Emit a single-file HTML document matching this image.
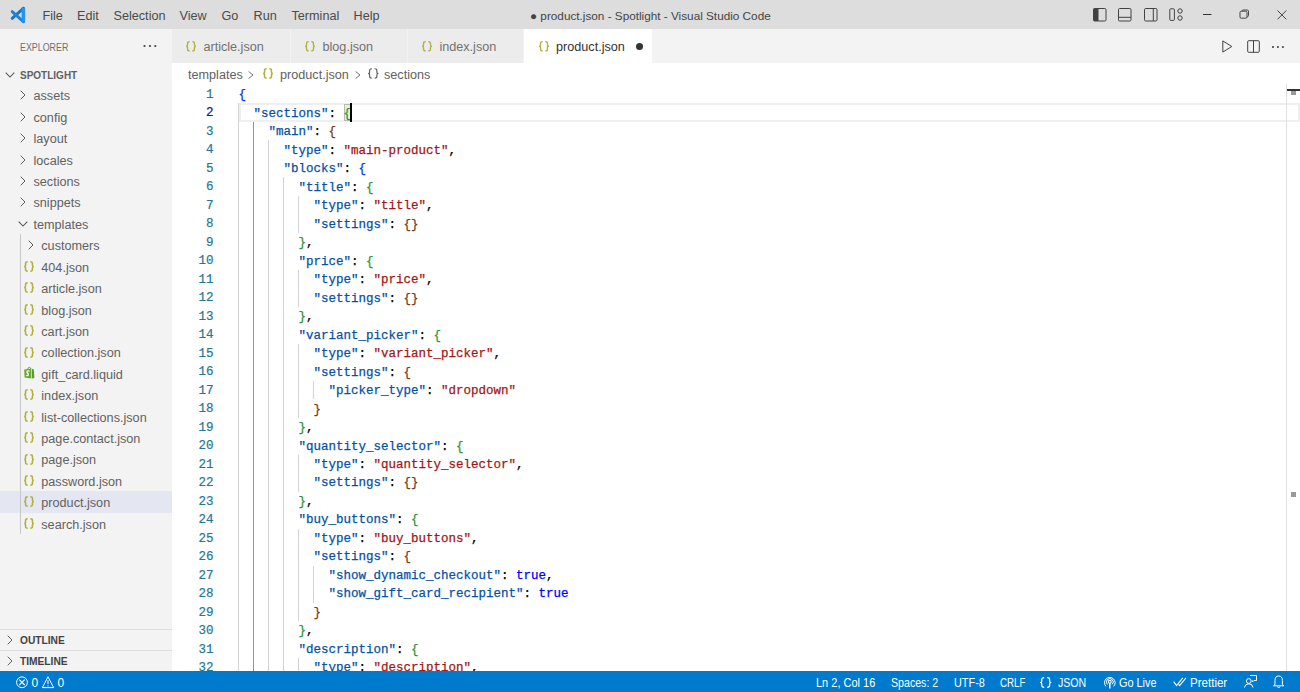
<!DOCTYPE html>
<html><head><meta charset="utf-8">
<style>
*{margin:0;padding:0;box-sizing:border-box}
html,body{width:1300px;height:692px;overflow:hidden;background:#fff;font-family:"Liberation Sans",sans-serif;}
.abs{position:absolute}
#title{position:absolute;left:0;top:0;width:1300px;height:29px;background:#dddddd}
.menu{position:absolute;top:1.5px;height:29px;line-height:29px;font-size:12.65px;color:#4a4a4a;white-space:nowrap}
#wtitle{position:absolute;top:0.5px;left:530px;height:29px;line-height:29px;font-size:11.75px;color:#444;white-space:nowrap}
#side{position:absolute;left:0;top:29px;width:172px;height:642px;background:#f3f3f3;overflow:hidden}
.row{position:absolute;left:0;width:172px;height:21.41px;line-height:21.41px;font-size:12.65px;color:#616161;white-space:nowrap}
.row .t{position:absolute;top:2px}
.sel{background:#e4e6f1}
#tabs{position:absolute;left:172px;top:29px;width:1128px;height:34px;background:#f3f3f3}
.tab{position:absolute;top:0;height:34px;background:#ececec;border-right:1px solid #f3f3f3}
.tab .t{position:absolute;top:0.9px;line-height:34px;font-size:12.65px;color:#717171;white-space:nowrap}
.tab.act{background:#fff}
.tab.act .t{color:#333}
#crumb{position:absolute;left:172px;top:63px;height:21.4px;line-height:21.4px;font-size:12.65px;color:#616161;white-space:nowrap;width:1128px}
#crumb span{position:absolute;top:1.5px}
#status{position:absolute;left:0;top:671.3px;width:1300px;height:20.7px;background:#007acc;color:#fff;font-size:12px}
#status .t{position:absolute;top:2.1px;line-height:21px;white-space:nowrap;transform-origin:0 0}
.ln{position:absolute;height:18.49px;line-height:18.49px;padding-top:1.3px;font-family:"Liberation Mono",monospace;font-size:12.5px;white-space:pre;color:#000;-webkit-text-stroke:0.25px currentColor}
.num{position:absolute;left:180px;width:33.5px;text-align:right;height:18.49px;line-height:18.49px;padding-top:1.1px;font-family:"Liberation Mono",monospace;font-size:12.5px;color:#237893;-webkit-text-stroke:0.2px currentColor}
.num.act{color:#0b216f}
.k{color:#0451a5}.s{color:#a31515}.p{color:#000}.b1{color:#0431fa}.b2{color:#319331}.b3{color:#7b3814}.t{}
.ln .t2{color:#0000ff}
.g{position:absolute;width:1px;height:18.49px;background:#d3d3d3}
.ga{background:#939393}
svg{position:absolute;overflow:visible}
</style></head><body>
<!-- TITLE BAR -->
<div id="title">
  <svg style="left:9px;top:7px" width="17" height="16" viewBox="0 0 17 16">
    <path d="M14.6 1.2 L3.2 11.4" stroke="#1c74c4" stroke-width="2.9" stroke-linecap="round"/>
    <path d="M14.6 14.8 L3.2 4.6" stroke="#1f82d6" stroke-width="2.9" stroke-linecap="round"/>
    <path d="M12.6 0.6 L15.4 1.6 Q16.2 2 16.2 2.9 L16.2 13.1 Q16.2 14 15.4 14.4 L12.6 15.4 Z" fill="#2496ed"/>
  </svg>
  <div class="menu" style="left:42.5px">File</div>
  <div class="menu" style="left:77px">Edit</div>
  <div class="menu" style="left:113.5px">Selection</div>
  <div class="menu" style="left:179.5px">View</div>
  <div class="menu" style="left:221.5px">Go</div>
  <div class="menu" style="left:253.5px">Run</div>
  <div class="menu" style="left:291.5px">Terminal</div>
  <div class="menu" style="left:353.5px">Help</div>
  <div id="wtitle">● product.json - Spotlight - Visual Studio Code</div>
  <!-- layout icons -->
  <svg style="left:1093px;top:8px" width="14" height="14" viewBox="0 0 14 14">
    <rect x="0.5" y="0.5" width="12.5" height="12.5" rx="1.2" fill="none" stroke="#424242" stroke-width="1"/>
    <rect x="0.5" y="0.5" width="5" height="12.5" fill="#424242"/>
  </svg>
  <svg style="left:1118px;top:8px" width="14" height="14" viewBox="0 0 14 14">
    <rect x="0.5" y="0.5" width="12.5" height="12.5" rx="1.2" fill="none" stroke="#424242" stroke-width="1"/>
    <line x1="0.5" y1="9.3" x2="13" y2="9.3" stroke="#424242" stroke-width="1"/>
  </svg>
  <svg style="left:1143.5px;top:8px" width="14" height="14" viewBox="0 0 14 14">
    <rect x="0.5" y="0.5" width="12.5" height="12.5" rx="1.2" fill="none" stroke="#424242" stroke-width="1"/>
    <line x1="9.3" y1="0.5" x2="9.3" y2="13" stroke="#424242" stroke-width="1"/>
  </svg>
  <svg style="left:1169px;top:8px" width="14" height="14" viewBox="0 0 14 14">
    <rect x="0.8" y="0.8" width="4.6" height="11.6" rx="1" fill="none" stroke="#424242" stroke-width="1"/>
    <circle cx="11" cy="3" r="2.2" fill="none" stroke="#424242" stroke-width="1"/>
    <circle cx="11" cy="10" r="2.2" fill="none" stroke="#424242" stroke-width="1"/>
  </svg>
  <!-- window controls -->
  <svg style="left:1202px;top:8px" width="12" height="12" viewBox="0 0 12 12"><line x1="1" y1="6.5" x2="9.5" y2="6.5" stroke="#333" stroke-width="1"/></svg>
  <svg style="left:1239px;top:9px" width="12" height="12" viewBox="0 0 12 12">
    <rect x="1" y="2.2" width="7" height="7" rx="1.2" fill="none" stroke="#444" stroke-width="1"/>
    <path d="M3 2.2 Q3 1 4.2 1 L8.3 1 Q9.5 1 9.5 2.2 L9.5 6.5 Q9.5 7.7 8.3 7.7" fill="none" stroke="#444" stroke-width="1"/>
  </svg>
  <svg style="left:1277px;top:10px" width="10" height="10" viewBox="0 0 10 10"><path d="M0.5 0.5 L9.3 9.3 M9.3 0.5 L0.5 9.3" stroke="#333" stroke-width="0.9"/></svg>
</div>

<!-- SIDEBAR -->
<div id="side">
  <div class="abs" style="left:20px;top:1.4px;height:34px;line-height:34px;font-size:10.7px;color:#6f6f6f;transform:scaleX(0.83);transform-origin:0 0">EXPLORER</div>
  <svg style="left:142px;top:15px" width="16" height="4" viewBox="0 0 16 4"><circle cx="2.5" cy="2" r="1.1" fill="#424242"/><circle cx="8" cy="2" r="1.1" fill="#424242"/><circle cx="13.3" cy="2" r="1.1" fill="#424242"/></svg>
<div class="row" style="top:34px"><svg style="left:5px;top:8.5px" width="10" height="6" viewBox="0 0 10 6"><path d="M0.7 0.7 L5 5 L9.3 0.7" fill="none" stroke="#555555" stroke-width="1.05"/></svg><span class="t" style="left:20px;font-size:10px;font-weight:bold;color:#616161">SPOTLIGHT</span></div>
<div class="row" style="top:55.41px"><svg style="left:20px;top:6px" width="6" height="10" viewBox="0 0 6 10"><path d="M0.7 0.7 L5 5 L0.7 9.3" fill="none" stroke="#555555" stroke-width="0.95"/></svg><span class="t" style="left:33.5px">assets</span></div>
<div class="row" style="top:76.82px"><svg style="left:20px;top:6px" width="6" height="10" viewBox="0 0 6 10"><path d="M0.7 0.7 L5 5 L0.7 9.3" fill="none" stroke="#555555" stroke-width="0.95"/></svg><span class="t" style="left:33.5px">config</span></div>
<div class="row" style="top:98.23px"><svg style="left:20px;top:6px" width="6" height="10" viewBox="0 0 6 10"><path d="M0.7 0.7 L5 5 L0.7 9.3" fill="none" stroke="#555555" stroke-width="0.95"/></svg><span class="t" style="left:33.5px">layout</span></div>
<div class="row" style="top:119.64px"><svg style="left:20px;top:6px" width="6" height="10" viewBox="0 0 6 10"><path d="M0.7 0.7 L5 5 L0.7 9.3" fill="none" stroke="#555555" stroke-width="0.95"/></svg><span class="t" style="left:33.5px">locales</span></div>
<div class="row" style="top:141.05px"><svg style="left:20px;top:6px" width="6" height="10" viewBox="0 0 6 10"><path d="M0.7 0.7 L5 5 L0.7 9.3" fill="none" stroke="#555555" stroke-width="0.95"/></svg><span class="t" style="left:33.5px">sections</span></div>
<div class="row" style="top:162.46px"><svg style="left:20px;top:6px" width="6" height="10" viewBox="0 0 6 10"><path d="M0.7 0.7 L5 5 L0.7 9.3" fill="none" stroke="#555555" stroke-width="0.95"/></svg><span class="t" style="left:33.5px">snippets</span></div>
<div class="row" style="top:183.87px"><svg style="left:17.5px;top:8px" width="10" height="6" viewBox="0 0 10 6"><path d="M0.7 0.7 L5 5 L9.3 0.7" fill="none" stroke="#555555" stroke-width="1.05"/></svg><span class="t" style="left:33.5px">templates</span></div>
<div class="row" style="top:205.28px"><svg style="left:27.5px;top:6px" width="6" height="10" viewBox="0 0 6 10"><path d="M0.7 0.7 L5 5 L0.7 9.3" fill="none" stroke="#555555" stroke-width="0.95"/></svg><span class="t" style="left:41.3px">customers</span></div>
<div class="row" style="top:226.69px"><svg style="left:24px;top:5.2px" width="10" height="11" viewBox="0 0 10 11"><path d="M3.70 0.7 Q1.55 0.7 1.55 2.4 L1.55 4.20 Q1.55 5.50 0.10 5.50 Q1.55 5.50 1.55 6.80 L1.55 8.60 Q1.55 10.30 3.70 10.30 M6.30 0.7 Q8.45 0.7 8.45 2.4 L8.45 4.20 Q8.45 5.50 9.90 5.50 Q8.45 5.50 8.45 6.80 L8.45 8.60 Q8.45 10.30 6.30 10.30" fill="none" stroke="#b0b23c" stroke-width="1.55"/></svg><span class="t" style="left:41.3px">404.json</span></div>
<div class="row" style="top:248.10px"><svg style="left:24px;top:5.2px" width="10" height="11" viewBox="0 0 10 11"><path d="M3.70 0.7 Q1.55 0.7 1.55 2.4 L1.55 4.20 Q1.55 5.50 0.10 5.50 Q1.55 5.50 1.55 6.80 L1.55 8.60 Q1.55 10.30 3.70 10.30 M6.30 0.7 Q8.45 0.7 8.45 2.4 L8.45 4.20 Q8.45 5.50 9.90 5.50 Q8.45 5.50 8.45 6.80 L8.45 8.60 Q8.45 10.30 6.30 10.30" fill="none" stroke="#b0b23c" stroke-width="1.55"/></svg><span class="t" style="left:41.3px">article.json</span></div>
<div class="row" style="top:269.51px"><svg style="left:24px;top:5.2px" width="10" height="11" viewBox="0 0 10 11"><path d="M3.70 0.7 Q1.55 0.7 1.55 2.4 L1.55 4.20 Q1.55 5.50 0.10 5.50 Q1.55 5.50 1.55 6.80 L1.55 8.60 Q1.55 10.30 3.70 10.30 M6.30 0.7 Q8.45 0.7 8.45 2.4 L8.45 4.20 Q8.45 5.50 9.90 5.50 Q8.45 5.50 8.45 6.80 L8.45 8.60 Q8.45 10.30 6.30 10.30" fill="none" stroke="#b0b23c" stroke-width="1.55"/></svg><span class="t" style="left:41.3px">blog.json</span></div>
<div class="row" style="top:290.92px"><svg style="left:24px;top:5.2px" width="10" height="11" viewBox="0 0 10 11"><path d="M3.70 0.7 Q1.55 0.7 1.55 2.4 L1.55 4.20 Q1.55 5.50 0.10 5.50 Q1.55 5.50 1.55 6.80 L1.55 8.60 Q1.55 10.30 3.70 10.30 M6.30 0.7 Q8.45 0.7 8.45 2.4 L8.45 4.20 Q8.45 5.50 9.90 5.50 Q8.45 5.50 8.45 6.80 L8.45 8.60 Q8.45 10.30 6.30 10.30" fill="none" stroke="#b0b23c" stroke-width="1.55"/></svg><span class="t" style="left:41.3px">cart.json</span></div>
<div class="row" style="top:312.33px"><svg style="left:24px;top:5.2px" width="10" height="11" viewBox="0 0 10 11"><path d="M3.70 0.7 Q1.55 0.7 1.55 2.4 L1.55 4.20 Q1.55 5.50 0.10 5.50 Q1.55 5.50 1.55 6.80 L1.55 8.60 Q1.55 10.30 3.70 10.30 M6.30 0.7 Q8.45 0.7 8.45 2.4 L8.45 4.20 Q8.45 5.50 9.90 5.50 Q8.45 5.50 8.45 6.80 L8.45 8.60 Q8.45 10.30 6.30 10.30" fill="none" stroke="#b0b23c" stroke-width="1.55"/></svg><span class="t" style="left:41.3px">collection.json</span></div>
<div class="row" style="top:333.74px"><svg style="left:24px;top:4.5px" width="11" height="12" viewBox="0 0 11 12"><path d="M3.6 2.6 Q3.8 0.4 5.4 0.4 Q6.6 0.4 6.9 2" fill="none" stroke="#5e9e2e" stroke-width="1"/><path d="M0.2 2.6 L7.2 1.8 L7.2 11.4 L0.6 10.6 Z" fill="#67a830"/><path d="M7.8 1.8 L9.8 2.4 L10.4 11 L7.8 11.4 Z" fill="#5a9a2a"/><path d="M5.6 4.2 Q4.6 3.6 3.6 4 Q2.4 4.6 3.2 5.8 Q4.6 6.8 4.4 7.8 Q4 9 2.2 8.4" fill="none" stroke="#fff" stroke-width="1.3"/></svg><span class="t" style="left:41.3px">gift_card.liquid</span></div>
<div class="row" style="top:355.15px"><svg style="left:24px;top:5.2px" width="10" height="11" viewBox="0 0 10 11"><path d="M3.70 0.7 Q1.55 0.7 1.55 2.4 L1.55 4.20 Q1.55 5.50 0.10 5.50 Q1.55 5.50 1.55 6.80 L1.55 8.60 Q1.55 10.30 3.70 10.30 M6.30 0.7 Q8.45 0.7 8.45 2.4 L8.45 4.20 Q8.45 5.50 9.90 5.50 Q8.45 5.50 8.45 6.80 L8.45 8.60 Q8.45 10.30 6.30 10.30" fill="none" stroke="#b0b23c" stroke-width="1.55"/></svg><span class="t" style="left:41.3px">index.json</span></div>
<div class="row" style="top:376.56px"><svg style="left:24px;top:5.2px" width="10" height="11" viewBox="0 0 10 11"><path d="M3.70 0.7 Q1.55 0.7 1.55 2.4 L1.55 4.20 Q1.55 5.50 0.10 5.50 Q1.55 5.50 1.55 6.80 L1.55 8.60 Q1.55 10.30 3.70 10.30 M6.30 0.7 Q8.45 0.7 8.45 2.4 L8.45 4.20 Q8.45 5.50 9.90 5.50 Q8.45 5.50 8.45 6.80 L8.45 8.60 Q8.45 10.30 6.30 10.30" fill="none" stroke="#b0b23c" stroke-width="1.55"/></svg><span class="t" style="left:41.3px">list-collections.json</span></div>
<div class="row" style="top:397.97px"><svg style="left:24px;top:5.2px" width="10" height="11" viewBox="0 0 10 11"><path d="M3.70 0.7 Q1.55 0.7 1.55 2.4 L1.55 4.20 Q1.55 5.50 0.10 5.50 Q1.55 5.50 1.55 6.80 L1.55 8.60 Q1.55 10.30 3.70 10.30 M6.30 0.7 Q8.45 0.7 8.45 2.4 L8.45 4.20 Q8.45 5.50 9.90 5.50 Q8.45 5.50 8.45 6.80 L8.45 8.60 Q8.45 10.30 6.30 10.30" fill="none" stroke="#b0b23c" stroke-width="1.55"/></svg><span class="t" style="left:41.3px">page.contact.json</span></div>
<div class="row" style="top:419.38px"><svg style="left:24px;top:5.2px" width="10" height="11" viewBox="0 0 10 11"><path d="M3.70 0.7 Q1.55 0.7 1.55 2.4 L1.55 4.20 Q1.55 5.50 0.10 5.50 Q1.55 5.50 1.55 6.80 L1.55 8.60 Q1.55 10.30 3.70 10.30 M6.30 0.7 Q8.45 0.7 8.45 2.4 L8.45 4.20 Q8.45 5.50 9.90 5.50 Q8.45 5.50 8.45 6.80 L8.45 8.60 Q8.45 10.30 6.30 10.30" fill="none" stroke="#b0b23c" stroke-width="1.55"/></svg><span class="t" style="left:41.3px">page.json</span></div>
<div class="row" style="top:440.79px"><svg style="left:24px;top:5.2px" width="10" height="11" viewBox="0 0 10 11"><path d="M3.70 0.7 Q1.55 0.7 1.55 2.4 L1.55 4.20 Q1.55 5.50 0.10 5.50 Q1.55 5.50 1.55 6.80 L1.55 8.60 Q1.55 10.30 3.70 10.30 M6.30 0.7 Q8.45 0.7 8.45 2.4 L8.45 4.20 Q8.45 5.50 9.90 5.50 Q8.45 5.50 8.45 6.80 L8.45 8.60 Q8.45 10.30 6.30 10.30" fill="none" stroke="#b0b23c" stroke-width="1.55"/></svg><span class="t" style="left:41.3px">password.json</span></div>
<div class="row sel" style="top:462.20px"><svg style="left:24px;top:5.2px" width="10" height="11" viewBox="0 0 10 11"><path d="M3.70 0.7 Q1.55 0.7 1.55 2.4 L1.55 4.20 Q1.55 5.50 0.10 5.50 Q1.55 5.50 1.55 6.80 L1.55 8.60 Q1.55 10.30 3.70 10.30 M6.30 0.7 Q8.45 0.7 8.45 2.4 L8.45 4.20 Q8.45 5.50 9.90 5.50 Q8.45 5.50 8.45 6.80 L8.45 8.60 Q8.45 10.30 6.30 10.30" fill="none" stroke="#b0b23c" stroke-width="1.55"/></svg><span class="t" style="left:41.3px">product.json</span></div>
<div class="row" style="top:483.61px"><svg style="left:24px;top:5.2px" width="10" height="11" viewBox="0 0 10 11"><path d="M3.70 0.7 Q1.55 0.7 1.55 2.4 L1.55 4.20 Q1.55 5.50 0.10 5.50 Q1.55 5.50 1.55 6.80 L1.55 8.60 Q1.55 10.30 3.70 10.30 M6.30 0.7 Q8.45 0.7 8.45 2.4 L8.45 4.20 Q8.45 5.50 9.90 5.50 Q8.45 5.50 8.45 6.80 L8.45 8.60 Q8.45 10.30 6.30 10.30" fill="none" stroke="#b0b23c" stroke-width="1.55"/></svg><span class="t" style="left:41.3px">search.json</span></div>
<div class="abs" style="left:19.5px;top:205.28px;width:1px;height:299.74px;background:#c6c6c6"></div>
<div class="abs" style="left:0;top:600px;width:172px;height:21px;border-top:1px solid #dedede"><svg style="left:7px;top:5.2px" width="6" height="10" viewBox="0 0 6 10"><path d="M0.7 0.7 L5 5 L0.7 9.3" fill="none" stroke="#555555" stroke-width="0.95"/></svg><span class="abs" style="left:20px;top:1px;line-height:20px;font-size:10.2px;font-weight:bold;color:#424242">OUTLINE</span></div>
<div class="abs" style="left:0;top:621px;width:172px;height:21px;border-top:1px solid #dedede"><svg style="left:7px;top:5.2px" width="6" height="10" viewBox="0 0 6 10"><path d="M0.7 0.7 L5 5 L0.7 9.3" fill="none" stroke="#555555" stroke-width="0.95"/></svg><span class="abs" style="left:20px;top:1px;line-height:20px;font-size:10.2px;font-weight:bold;color:#424242">TIMELINE</span></div>
</div>

<!-- TABS -->
<div id="tabs">
<div class="tab" style="left:0px;width:119px"><svg style="left:14px;top:11.8px" width="10" height="10.6" viewBox="0 0 10 10.6"><path d="M3.70 0.7 Q1.55 0.7 1.55 2.4 L1.55 4.00 Q1.55 5.30 0.10 5.30 Q1.55 5.30 1.55 6.60 L1.55 8.20 Q1.55 9.90 3.70 9.90 M6.30 0.7 Q8.45 0.7 8.45 2.4 L8.45 4.00 Q8.45 5.30 9.90 5.30 Q8.45 5.30 8.45 6.60 L8.45 8.20 Q8.45 9.90 6.30 9.90" fill="none" stroke="#b0b23c" stroke-width="1.35"/></svg><span class="t" style="left:31.4px">article.json</span></div>
<div class="tab" style="left:119px;width:117px"><svg style="left:13.6px;top:11.8px" width="10" height="10.6" viewBox="0 0 10 10.6"><path d="M3.70 0.7 Q1.55 0.7 1.55 2.4 L1.55 4.00 Q1.55 5.30 0.10 5.30 Q1.55 5.30 1.55 6.60 L1.55 8.20 Q1.55 9.90 3.70 9.90 M6.30 0.7 Q8.45 0.7 8.45 2.4 L8.45 4.00 Q8.45 5.30 9.90 5.30 Q8.45 5.30 8.45 6.60 L8.45 8.20 Q8.45 9.90 6.30 9.90" fill="none" stroke="#b0b23c" stroke-width="1.35"/></svg><span class="t" style="left:31.5px">blog.json</span></div>
<div class="tab" style="left:236px;width:116px"><svg style="left:13.5px;top:11.8px" width="10" height="10.6" viewBox="0 0 10 10.6"><path d="M3.70 0.7 Q1.55 0.7 1.55 2.4 L1.55 4.00 Q1.55 5.30 0.10 5.30 Q1.55 5.30 1.55 6.60 L1.55 8.20 Q1.55 9.90 3.70 9.90 M6.30 0.7 Q8.45 0.7 8.45 2.4 L8.45 4.00 Q8.45 5.30 9.90 5.30 Q8.45 5.30 8.45 6.60 L8.45 8.20 Q8.45 9.90 6.30 9.90" fill="none" stroke="#b0b23c" stroke-width="1.35"/></svg><span class="t" style="left:31.4px">index.json</span></div>
<div class="tab act" style="left:352px;width:129px"><svg style="left:14.8px;top:11.8px" width="10" height="10.6" viewBox="0 0 10 10.6"><path d="M3.70 0.7 Q1.55 0.7 1.55 2.4 L1.55 4.00 Q1.55 5.30 0.10 5.30 Q1.55 5.30 1.55 6.60 L1.55 8.20 Q1.55 9.90 3.70 9.90 M6.30 0.7 Q8.45 0.7 8.45 2.4 L8.45 4.00 Q8.45 5.30 9.90 5.30 Q8.45 5.30 8.45 6.60 L8.45 8.20 Q8.45 9.90 6.30 9.90" fill="none" stroke="#b0b23c" stroke-width="1.35"/></svg><span class="t" style="left:32px">product.json</span><div class="abs" style="left:111.7px;top:13.9px;width:7.6px;height:7.6px;border-radius:50%;background:#333"></div></div>
</div>

<!-- TAB ACTIONS -->
<svg style="left:1222px;top:40px" width="11" height="13" viewBox="0 0 11 13"><path d="M0.8 0.9 L9.8 6.5 L0.8 12.1 Z" fill="none" stroke="#424242" stroke-width="1" stroke-linejoin="round"/></svg>
<svg style="left:1246.5px;top:39.5px" width="13" height="13" viewBox="0 0 13 13"><rect x="0.7" y="0.7" width="11.6" height="11.6" rx="1" fill="none" stroke="#424242" stroke-width="1"/><line x1="6.5" y1="0.7" x2="6.5" y2="12.3" stroke="#424242" stroke-width="1"/></svg>
<svg style="left:1271px;top:44.5px" width="14" height="4" viewBox="0 0 14 4"><circle cx="2" cy="2" r="1.05" fill="#424242"/><circle cx="6.9" cy="2" r="1.05" fill="#424242"/><circle cx="11.9" cy="2" r="1.05" fill="#424242"/></svg>
<!-- BREADCRUMBS -->
<div id="crumb">
<span style="left:16px">templates</span>
<svg style="left:76.3px;top:7.8px" width="6" height="8" viewBox="0 0 6 8"><path d="M0.6 0.5 L5 4 L0.6 7.5" fill="none" stroke="#777" stroke-width="1"/></svg>
<svg style="left:91px;top:5.2px" width="10" height="11" viewBox="0 0 10 11"><path d="M3.70 0.7 Q1.55 0.7 1.55 2.4 L1.55 4.20 Q1.55 5.50 0.10 5.50 Q1.55 5.50 1.55 6.80 L1.55 8.60 Q1.55 10.30 3.70 10.30 M6.30 0.7 Q8.45 0.7 8.45 2.4 L8.45 4.20 Q8.45 5.50 9.90 5.50 Q8.45 5.50 8.45 6.80 L8.45 8.60 Q8.45 10.30 6.30 10.30" fill="none" stroke="#b0b23c" stroke-width="1.55"/></svg>
<span style="left:108px">product.json</span>
<svg style="left:182.5px;top:7.8px" width="6" height="8" viewBox="0 0 6 8"><path d="M0.6 0.5 L5 4 L0.6 7.5" fill="none" stroke="#777" stroke-width="1"/></svg>
<svg style="left:196px;top:5.2px" width="10.5" height="11" viewBox="0 0 10.5 11"><path d="M3.88 0.7 Q1.63 0.7 1.63 2.4 L1.63 4.20 Q1.63 5.50 0.10 5.50 Q1.63 5.50 1.63 6.80 L1.63 8.60 Q1.63 10.30 3.88 10.30 M6.62 0.7 Q8.87 0.7 8.87 2.4 L8.87 4.20 Q8.87 5.50 10.40 5.50 Q8.87 5.50 8.87 6.80 L8.87 8.60 Q8.87 10.30 6.62 10.30" fill="none" stroke="#555555" stroke-width="1.1"/></svg>
<span style="left:212px">sections</span>
</div>

<!-- EDITOR -->
<div id="editor">
<div class="abs" style="left:239px;top:102.8px;width:1061px;height:19.3px;border:2px solid #efefef"></div>
<div class="g" style="top:103.39px;left:238px"></div>
<div class="g" style="top:121.88px;left:238px"></div>
<div class="g ga" style="top:121.88px;left:253px"></div>
<div class="g" style="top:140.37px;left:238px"></div>
<div class="g ga" style="top:140.37px;left:253px"></div>
<div class="g" style="top:140.37px;left:268px"></div>
<div class="g" style="top:158.86px;left:238px"></div>
<div class="g ga" style="top:158.86px;left:253px"></div>
<div class="g" style="top:158.86px;left:268px"></div>
<div class="g" style="top:177.35px;left:238px"></div>
<div class="g ga" style="top:177.35px;left:253px"></div>
<div class="g" style="top:177.35px;left:268px"></div>
<div class="g" style="top:177.35px;left:283px"></div>
<div class="g" style="top:195.84px;left:238px"></div>
<div class="g ga" style="top:195.84px;left:253px"></div>
<div class="g" style="top:195.84px;left:268px"></div>
<div class="g" style="top:195.84px;left:283px"></div>
<div class="g" style="top:195.84px;left:298px"></div>
<div class="g" style="top:214.33px;left:238px"></div>
<div class="g ga" style="top:214.33px;left:253px"></div>
<div class="g" style="top:214.33px;left:268px"></div>
<div class="g" style="top:214.33px;left:283px"></div>
<div class="g" style="top:214.33px;left:298px"></div>
<div class="g" style="top:232.82px;left:238px"></div>
<div class="g ga" style="top:232.82px;left:253px"></div>
<div class="g" style="top:232.82px;left:268px"></div>
<div class="g" style="top:232.82px;left:283px"></div>
<div class="g" style="top:251.31px;left:238px"></div>
<div class="g ga" style="top:251.31px;left:253px"></div>
<div class="g" style="top:251.31px;left:268px"></div>
<div class="g" style="top:251.31px;left:283px"></div>
<div class="g" style="top:269.80px;left:238px"></div>
<div class="g ga" style="top:269.80px;left:253px"></div>
<div class="g" style="top:269.80px;left:268px"></div>
<div class="g" style="top:269.80px;left:283px"></div>
<div class="g" style="top:269.80px;left:298px"></div>
<div class="g" style="top:288.29px;left:238px"></div>
<div class="g ga" style="top:288.29px;left:253px"></div>
<div class="g" style="top:288.29px;left:268px"></div>
<div class="g" style="top:288.29px;left:283px"></div>
<div class="g" style="top:288.29px;left:298px"></div>
<div class="g" style="top:306.78px;left:238px"></div>
<div class="g ga" style="top:306.78px;left:253px"></div>
<div class="g" style="top:306.78px;left:268px"></div>
<div class="g" style="top:306.78px;left:283px"></div>
<div class="g" style="top:325.27px;left:238px"></div>
<div class="g ga" style="top:325.27px;left:253px"></div>
<div class="g" style="top:325.27px;left:268px"></div>
<div class="g" style="top:325.27px;left:283px"></div>
<div class="g" style="top:343.76px;left:238px"></div>
<div class="g ga" style="top:343.76px;left:253px"></div>
<div class="g" style="top:343.76px;left:268px"></div>
<div class="g" style="top:343.76px;left:283px"></div>
<div class="g" style="top:343.76px;left:298px"></div>
<div class="g" style="top:362.25px;left:238px"></div>
<div class="g ga" style="top:362.25px;left:253px"></div>
<div class="g" style="top:362.25px;left:268px"></div>
<div class="g" style="top:362.25px;left:283px"></div>
<div class="g" style="top:362.25px;left:298px"></div>
<div class="g" style="top:380.74px;left:238px"></div>
<div class="g ga" style="top:380.74px;left:253px"></div>
<div class="g" style="top:380.74px;left:268px"></div>
<div class="g" style="top:380.74px;left:283px"></div>
<div class="g" style="top:380.74px;left:298px"></div>
<div class="g" style="top:380.74px;left:313px"></div>
<div class="g" style="top:399.23px;left:238px"></div>
<div class="g ga" style="top:399.23px;left:253px"></div>
<div class="g" style="top:399.23px;left:268px"></div>
<div class="g" style="top:399.23px;left:283px"></div>
<div class="g" style="top:399.23px;left:298px"></div>
<div class="g" style="top:417.72px;left:238px"></div>
<div class="g ga" style="top:417.72px;left:253px"></div>
<div class="g" style="top:417.72px;left:268px"></div>
<div class="g" style="top:417.72px;left:283px"></div>
<div class="g" style="top:436.21px;left:238px"></div>
<div class="g ga" style="top:436.21px;left:253px"></div>
<div class="g" style="top:436.21px;left:268px"></div>
<div class="g" style="top:436.21px;left:283px"></div>
<div class="g" style="top:454.70px;left:238px"></div>
<div class="g ga" style="top:454.70px;left:253px"></div>
<div class="g" style="top:454.70px;left:268px"></div>
<div class="g" style="top:454.70px;left:283px"></div>
<div class="g" style="top:454.70px;left:298px"></div>
<div class="g" style="top:473.19px;left:238px"></div>
<div class="g ga" style="top:473.19px;left:253px"></div>
<div class="g" style="top:473.19px;left:268px"></div>
<div class="g" style="top:473.19px;left:283px"></div>
<div class="g" style="top:473.19px;left:298px"></div>
<div class="g" style="top:491.68px;left:238px"></div>
<div class="g ga" style="top:491.68px;left:253px"></div>
<div class="g" style="top:491.68px;left:268px"></div>
<div class="g" style="top:491.68px;left:283px"></div>
<div class="g" style="top:510.17px;left:238px"></div>
<div class="g ga" style="top:510.17px;left:253px"></div>
<div class="g" style="top:510.17px;left:268px"></div>
<div class="g" style="top:510.17px;left:283px"></div>
<div class="g" style="top:528.66px;left:238px"></div>
<div class="g ga" style="top:528.66px;left:253px"></div>
<div class="g" style="top:528.66px;left:268px"></div>
<div class="g" style="top:528.66px;left:283px"></div>
<div class="g" style="top:528.66px;left:298px"></div>
<div class="g" style="top:547.15px;left:238px"></div>
<div class="g ga" style="top:547.15px;left:253px"></div>
<div class="g" style="top:547.15px;left:268px"></div>
<div class="g" style="top:547.15px;left:283px"></div>
<div class="g" style="top:547.15px;left:298px"></div>
<div class="g" style="top:565.64px;left:238px"></div>
<div class="g ga" style="top:565.64px;left:253px"></div>
<div class="g" style="top:565.64px;left:268px"></div>
<div class="g" style="top:565.64px;left:283px"></div>
<div class="g" style="top:565.64px;left:298px"></div>
<div class="g" style="top:565.64px;left:313px"></div>
<div class="g" style="top:584.13px;left:238px"></div>
<div class="g ga" style="top:584.13px;left:253px"></div>
<div class="g" style="top:584.13px;left:268px"></div>
<div class="g" style="top:584.13px;left:283px"></div>
<div class="g" style="top:584.13px;left:298px"></div>
<div class="g" style="top:584.13px;left:313px"></div>
<div class="g" style="top:602.62px;left:238px"></div>
<div class="g ga" style="top:602.62px;left:253px"></div>
<div class="g" style="top:602.62px;left:268px"></div>
<div class="g" style="top:602.62px;left:283px"></div>
<div class="g" style="top:602.62px;left:298px"></div>
<div class="g" style="top:621.11px;left:238px"></div>
<div class="g ga" style="top:621.11px;left:253px"></div>
<div class="g" style="top:621.11px;left:268px"></div>
<div class="g" style="top:621.11px;left:283px"></div>
<div class="g" style="top:639.60px;left:238px"></div>
<div class="g ga" style="top:639.60px;left:253px"></div>
<div class="g" style="top:639.60px;left:268px"></div>
<div class="g" style="top:639.60px;left:283px"></div>
<div class="g" style="top:658.09px;left:238px"></div>
<div class="g ga" style="top:658.09px;left:253px"></div>
<div class="g" style="top:658.09px;left:268px"></div>
<div class="g" style="top:658.09px;left:283px"></div>
<div class="g" style="top:658.09px;left:298px"></div>
<div class="abs" style="left:343.5px;top:104.4px;width:7.5px;height:16.5px;background:#e4f0e4;border:1px solid #b9b9b9"></div>
<div class="ln" style="top:84.90px;left:238.50px"><span class="b1">{</span></div>
<div class="num" style="top:84.90px">1</div>
<div class="ln" style="top:103.39px;left:253.50px"><span class="k">"sections"</span><span class="p">: </span><span class="b2">{</span></div>
<div class="num act" style="top:103.39px">2</div>
<div class="ln" style="top:121.88px;left:268.50px"><span class="k">"main"</span><span class="p">: </span><span class="b3">{</span></div>
<div class="num" style="top:121.88px">3</div>
<div class="ln" style="top:140.37px;left:283.50px"><span class="k">"type"</span><span class="p">: </span><span class="s">"main-product"</span><span class="p">,</span></div>
<div class="num" style="top:140.37px">4</div>
<div class="ln" style="top:158.86px;left:283.50px"><span class="k">"blocks"</span><span class="p">: </span><span class="b1">{</span></div>
<div class="num" style="top:158.86px">5</div>
<div class="ln" style="top:177.35px;left:298.50px"><span class="k">"title"</span><span class="p">: </span><span class="b2">{</span></div>
<div class="num" style="top:177.35px">6</div>
<div class="ln" style="top:195.84px;left:313.50px"><span class="k">"type"</span><span class="p">: </span><span class="s">"title"</span><span class="p">,</span></div>
<div class="num" style="top:195.84px">7</div>
<div class="ln" style="top:214.33px;left:313.50px"><span class="k">"settings"</span><span class="p">: </span><span class="b3">{}</span></div>
<div class="num" style="top:214.33px">8</div>
<div class="ln" style="top:232.82px;left:298.50px"><span class="b2">}</span><span class="p">,</span></div>
<div class="num" style="top:232.82px">9</div>
<div class="ln" style="top:251.31px;left:298.50px"><span class="k">"price"</span><span class="p">: </span><span class="b2">{</span></div>
<div class="num" style="top:251.31px">10</div>
<div class="ln" style="top:269.80px;left:313.50px"><span class="k">"type"</span><span class="p">: </span><span class="s">"price"</span><span class="p">,</span></div>
<div class="num" style="top:269.80px">11</div>
<div class="ln" style="top:288.29px;left:313.50px"><span class="k">"settings"</span><span class="p">: </span><span class="b3">{}</span></div>
<div class="num" style="top:288.29px">12</div>
<div class="ln" style="top:306.78px;left:298.50px"><span class="b2">}</span><span class="p">,</span></div>
<div class="num" style="top:306.78px">13</div>
<div class="ln" style="top:325.27px;left:298.50px"><span class="k">"variant_picker"</span><span class="p">: </span><span class="b2">{</span></div>
<div class="num" style="top:325.27px">14</div>
<div class="ln" style="top:343.76px;left:313.50px"><span class="k">"type"</span><span class="p">: </span><span class="s">"variant_picker"</span><span class="p">,</span></div>
<div class="num" style="top:343.76px">15</div>
<div class="ln" style="top:362.25px;left:313.50px"><span class="k">"settings"</span><span class="p">: </span><span class="b3">{</span></div>
<div class="num" style="top:362.25px">16</div>
<div class="ln" style="top:380.74px;left:328.50px"><span class="k">"picker_type"</span><span class="p">: </span><span class="s">"dropdown"</span></div>
<div class="num" style="top:380.74px">17</div>
<div class="ln" style="top:399.23px;left:313.50px"><span class="b3">}</span></div>
<div class="num" style="top:399.23px">18</div>
<div class="ln" style="top:417.72px;left:298.50px"><span class="b2">}</span><span class="p">,</span></div>
<div class="num" style="top:417.72px">19</div>
<div class="ln" style="top:436.21px;left:298.50px"><span class="k">"quantity_selector"</span><span class="p">: </span><span class="b2">{</span></div>
<div class="num" style="top:436.21px">20</div>
<div class="ln" style="top:454.70px;left:313.50px"><span class="k">"type"</span><span class="p">: </span><span class="s">"quantity_selector"</span><span class="p">,</span></div>
<div class="num" style="top:454.70px">21</div>
<div class="ln" style="top:473.19px;left:313.50px"><span class="k">"settings"</span><span class="p">: </span><span class="b3">{}</span></div>
<div class="num" style="top:473.19px">22</div>
<div class="ln" style="top:491.68px;left:298.50px"><span class="b2">}</span><span class="p">,</span></div>
<div class="num" style="top:491.68px">23</div>
<div class="ln" style="top:510.17px;left:298.50px"><span class="k">"buy_buttons"</span><span class="p">: </span><span class="b2">{</span></div>
<div class="num" style="top:510.17px">24</div>
<div class="ln" style="top:528.66px;left:313.50px"><span class="k">"type"</span><span class="p">: </span><span class="s">"buy_buttons"</span><span class="p">,</span></div>
<div class="num" style="top:528.66px">25</div>
<div class="ln" style="top:547.15px;left:313.50px"><span class="k">"settings"</span><span class="p">: </span><span class="b3">{</span></div>
<div class="num" style="top:547.15px">26</div>
<div class="ln" style="top:565.64px;left:328.50px"><span class="k">"show_dynamic_checkout"</span><span class="p">: </span><span class="t2">true</span><span class="p">,</span></div>
<div class="num" style="top:565.64px">27</div>
<div class="ln" style="top:584.13px;left:328.50px"><span class="k">"show_gift_card_recipient"</span><span class="p">: </span><span class="t2">true</span></div>
<div class="num" style="top:584.13px">28</div>
<div class="ln" style="top:602.62px;left:313.50px"><span class="b3">}</span></div>
<div class="num" style="top:602.62px">29</div>
<div class="ln" style="top:621.11px;left:298.50px"><span class="b2">}</span><span class="p">,</span></div>
<div class="num" style="top:621.11px">30</div>
<div class="ln" style="top:639.60px;left:298.50px"><span class="k">"description"</span><span class="p">: </span><span class="b2">{</span></div>
<div class="num" style="top:639.60px">31</div>
<div class="ln" style="top:658.09px;left:313.50px"><span class="k">"type"</span><span class="p">: </span><span class="s">"description"</span><span class="p">,</span></div>
<div class="num" style="top:658.09px">32</div>
<div class="abs" style="left:350.2px;top:103.4px;width:1.6px;height:18.5px;background:#000"></div>
<!-- overview ruler -->
<div class="abs" style="left:1286px;top:84.4px;width:1px;height:587px;background:#e0e0e0"></div>
<div class="abs" style="left:1287px;top:89px;width:13px;height:1.5px;background:#333"></div>
<div class="abs" style="left:1291px;top:90.5px;width:5px;height:4px;background:#999"></div>
<div class="abs" style="left:1291px;top:492px;width:5px;height:5px;background:#999"></div>
</div>

<!-- STATUS -->
<div id="status">
<svg style="left:15.6px;top:4.5px" width="13" height="13" viewBox="0 0 13 13"><circle cx="6" cy="6.3" r="5.4" fill="none" stroke="#fff" stroke-width="1"/><path d="M3.3 3.6 L8.7 9 M8.7 3.6 L3.3 9" stroke="#fff" stroke-width="1.1"/></svg>
<span class="t" style="left:31.5px">0</span>
<svg style="left:42px;top:4.5px" width="13" height="13" viewBox="0 0 13 13"><path d="M6 0.8 L11.6 11.6 L0.4 11.6 Z" fill="none" stroke="#fff" stroke-width="1" stroke-linejoin="round"/><path d="M6 4.3 L6 8.2 M6 9.4 L6 10.4" stroke="#fff" stroke-width="1"/></svg>
<span class="t" style="left:57.5px">0</span>
<span class="t" style="left:816px;transform:scaleX(0.917)">Ln 2, Col 16</span>
<span class="t" style="left:891.3px;transform:scaleX(0.885)">Spaces: 2</span>
<span class="t" style="left:953.8px;transform:scaleX(0.907)">UTF-8</span>
<span class="t" style="left:1000px;transform:scaleX(0.814)">CRLF</span>
<svg style="left:1040.4px;top:5.3px" width="11.4" height="11" viewBox="0 0 11.4 11"><path d="M4.22 0.7 Q1.77 0.7 1.77 2.4 L1.77 4.20 Q1.77 5.50 0.10 5.50 Q1.77 5.50 1.77 6.80 L1.77 8.60 Q1.77 10.30 4.22 10.30 M7.18 0.7 Q9.63 0.7 9.63 2.4 L9.63 4.20 Q9.63 5.50 11.30 5.50 Q9.63 5.50 9.63 6.80 L9.63 8.60 Q9.63 10.30 7.18 10.30" fill="none" stroke="#fff" stroke-width="1.2"/></svg>
<span class="t" style="left:1058px;transform:scaleX(0.882)">JSON</span>
<svg style="left:1103.5px;top:4.5px" width="12" height="15" viewBox="0 0 12 15"><circle cx="5.8" cy="5.8" r="1.4" fill="none" stroke="#fff" stroke-width="1.1"/><path d="M5.8 7.2 L5.8 12.6" stroke="#fff" stroke-width="1.5"/><path d="M3.4 8.4 A3.4 3.4 0 1 1 8.2 8.4" fill="none" stroke="#fff" stroke-width="1"/><path d="M1.9 10.3 A5.3 5.3 0 1 1 9.7 10.3" fill="none" stroke="#fff" stroke-width="1"/></svg>
<span class="t" style="left:1119.3px;transform:scaleX(0.905)">Go Live</span>
<svg style="left:1172.5px;top:5.5px" width="14" height="11" viewBox="0 0 14 11"><path d="M0.6 4.6 L3.6 8.6 L9.8 0.9 M5.6 7.3 L6.6 8.6 L13 0.9" fill="none" stroke="#fff" stroke-width="1.1"/></svg>
<span class="t" style="left:1190px;transform:scaleX(0.962)">Prettier</span>
<svg style="left:1243.9px;top:4px" width="13" height="13" viewBox="0 0 13 13"><circle cx="4.8" cy="6" r="2.4" fill="none" stroke="#fff" stroke-width="1"/><path d="M0.5 12.5 Q1 8.8 4.8 8.8 Q8.6 8.8 9 12.5" fill="none" stroke="#fff" stroke-width="1"/><path d="M6 0.5 L12.5 0.5 L12.5 5.5 L10 5.5 L8.5 7 L8.5 5.5" fill="none" stroke="#fff" stroke-width="1"/></svg>
<svg style="left:1273px;top:4px" width="12" height="13" viewBox="0 0 12 13"><path d="M2 9.5 L2 5.5 Q2 1 5.7 1 Q9.4 1 9.4 5.5 L9.4 9.5 L10.8 10.8 L0.6 10.8 Z" fill="none" stroke="#fff" stroke-width="1" stroke-linejoin="round"/><path d="M4.2 11.8 Q5.7 13.4 7.2 11.8" fill="none" stroke="#fff" stroke-width="1"/></svg>
</div>
</body></html>
